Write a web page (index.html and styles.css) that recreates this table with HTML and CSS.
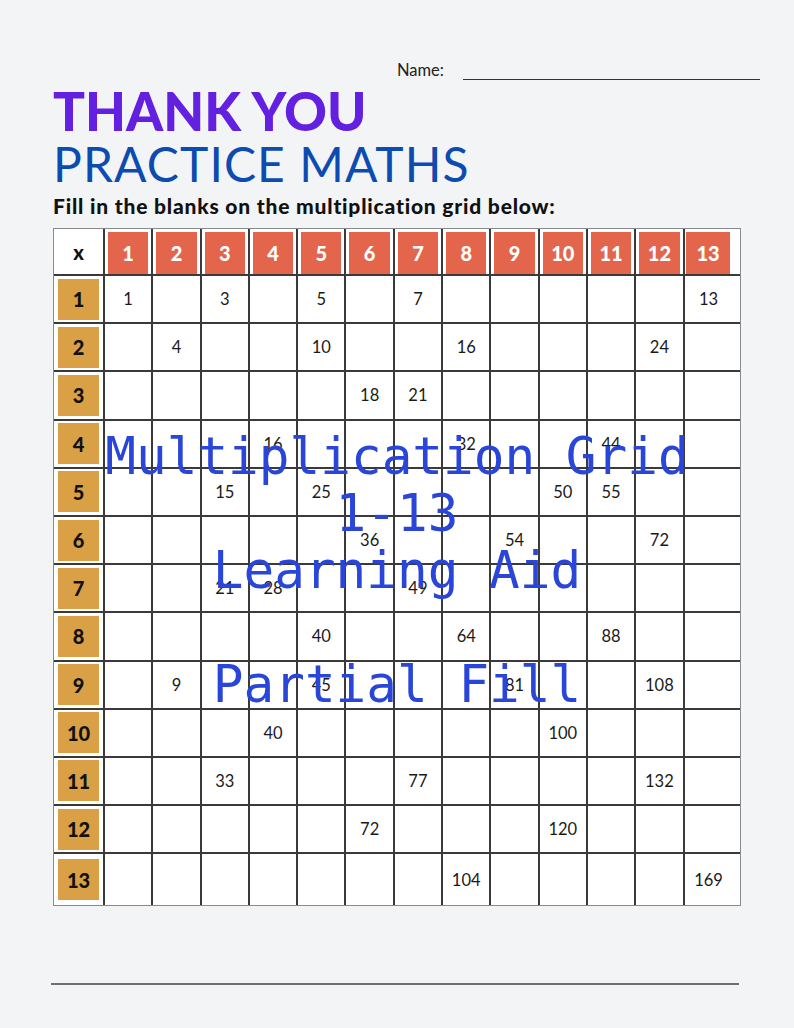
FILE: index.html
```html
<!DOCTYPE html>
<html lang="en">
<head>
<meta charset="utf-8">
<title>Multiplication Grid</title>
<link rel="stylesheet" href="styles.css">
</head>
<body>
<div class="page">
  <div class="name-row">
    <span class="name-label">Name:</span>
    <span class="name-line"></span>
  </div>
  <h1 class="title-main">THANK YOU</h1>
  <h2 class="title-sub">PRACTICE MATHS</h2>
  <p class="instructions">Fill in the blanks on the multiplication grid below:</p>

  <div class="grid-wrap">
    <div class="grid">
      <div class="cell corner">x</div>
      <div class="cell"><span class="col-head">1</span></div>
      <div class="cell"><span class="col-head">2</span></div>
      <div class="cell"><span class="col-head">3</span></div>
      <div class="cell"><span class="col-head">4</span></div>
      <div class="cell"><span class="col-head">5</span></div>
      <div class="cell"><span class="col-head">6</span></div>
      <div class="cell"><span class="col-head">7</span></div>
      <div class="cell"><span class="col-head">8</span></div>
      <div class="cell"><span class="col-head">9</span></div>
      <div class="cell"><span class="col-head">10</span></div>
      <div class="cell"><span class="col-head">11</span></div>
      <div class="cell"><span class="col-head">12</span></div>
      <div class="cell last-col"><span class="col-head">13</span></div>

      <div class="cell row-cell"><span class="row-head">1</span></div>
      <div class="cell">1</div><div class="cell"></div><div class="cell">3</div><div class="cell"></div><div class="cell">5</div><div class="cell"></div><div class="cell">7</div><div class="cell"></div><div class="cell"></div><div class="cell"></div><div class="cell"></div><div class="cell"></div><div class="cell last-col">13</div>

      <div class="cell row-cell"><span class="row-head">2</span></div>
      <div class="cell"></div><div class="cell">4</div><div class="cell"></div><div class="cell"></div><div class="cell">10</div><div class="cell"></div><div class="cell"></div><div class="cell">16</div><div class="cell"></div><div class="cell"></div><div class="cell"></div><div class="cell">24</div><div class="cell"></div>

      <div class="cell row-cell"><span class="row-head">3</span></div>
      <div class="cell"></div><div class="cell"></div><div class="cell"></div><div class="cell"></div><div class="cell"></div><div class="cell">18</div><div class="cell">21</div><div class="cell"></div><div class="cell"></div><div class="cell"></div><div class="cell"></div><div class="cell"></div><div class="cell"></div>

      <div class="cell row-cell"><span class="row-head">4</span></div>
      <div class="cell"></div><div class="cell"></div><div class="cell"></div><div class="cell">16</div><div class="cell"></div><div class="cell"></div><div class="cell"></div><div class="cell">32</div><div class="cell"></div><div class="cell"></div><div class="cell">44</div><div class="cell"></div><div class="cell"></div>

      <div class="cell row-cell"><span class="row-head">5</span></div>
      <div class="cell"></div><div class="cell"></div><div class="cell">15</div><div class="cell"></div><div class="cell">25</div><div class="cell"></div><div class="cell"></div><div class="cell"></div><div class="cell"></div><div class="cell">50</div><div class="cell">55</div><div class="cell"></div><div class="cell"></div>

      <div class="cell row-cell"><span class="row-head">6</span></div>
      <div class="cell"></div><div class="cell"></div><div class="cell"></div><div class="cell"></div><div class="cell"></div><div class="cell">36</div><div class="cell"></div><div class="cell"></div><div class="cell">54</div><div class="cell"></div><div class="cell"></div><div class="cell">72</div><div class="cell"></div>

      <div class="cell row-cell"><span class="row-head">7</span></div>
      <div class="cell"></div><div class="cell"></div><div class="cell">21</div><div class="cell">28</div><div class="cell"></div><div class="cell"></div><div class="cell">49</div><div class="cell"></div><div class="cell"></div><div class="cell"></div><div class="cell"></div><div class="cell"></div><div class="cell"></div>

      <div class="cell row-cell"><span class="row-head">8</span></div>
      <div class="cell"></div><div class="cell"></div><div class="cell"></div><div class="cell"></div><div class="cell">40</div><div class="cell"></div><div class="cell"></div><div class="cell">64</div><div class="cell"></div><div class="cell"></div><div class="cell">88</div><div class="cell"></div><div class="cell"></div>

      <div class="cell row-cell"><span class="row-head">9</span></div>
      <div class="cell"></div><div class="cell">9</div><div class="cell"></div><div class="cell"></div><div class="cell">45</div><div class="cell"></div><div class="cell"></div><div class="cell"></div><div class="cell">81</div><div class="cell"></div><div class="cell"></div><div class="cell">108</div><div class="cell"></div>

      <div class="cell row-cell"><span class="row-head">10</span></div>
      <div class="cell"></div><div class="cell"></div><div class="cell"></div><div class="cell">40</div><div class="cell"></div><div class="cell"></div><div class="cell"></div><div class="cell"></div><div class="cell"></div><div class="cell">100</div><div class="cell"></div><div class="cell"></div><div class="cell"></div>

      <div class="cell row-cell"><span class="row-head">11</span></div>
      <div class="cell"></div><div class="cell"></div><div class="cell">33</div><div class="cell"></div><div class="cell"></div><div class="cell"></div><div class="cell">77</div><div class="cell"></div><div class="cell"></div><div class="cell"></div><div class="cell"></div><div class="cell">132</div><div class="cell"></div>

      <div class="cell row-cell"><span class="row-head">12</span></div>
      <div class="cell"></div><div class="cell"></div><div class="cell"></div><div class="cell"></div><div class="cell"></div><div class="cell">72</div><div class="cell"></div><div class="cell"></div><div class="cell"></div><div class="cell">120</div><div class="cell"></div><div class="cell"></div><div class="cell"></div>

      <div class="cell row-cell"><span class="row-head">13</span></div>
      <div class="cell"></div><div class="cell"></div><div class="cell"></div><div class="cell"></div><div class="cell"></div><div class="cell"></div><div class="cell"></div><div class="cell">104</div><div class="cell"></div><div class="cell"></div><div class="cell"></div><div class="cell"></div><div class="cell last-col">169</div>
    </div>
    <div class="watermark">Multiplication Grid
1-13
Learning Aid

Partial Fill</div>
  </div>

  <div class="footer-line"></div>
</div>
</body>
</html>
```

FILE: styles.css
```css
* { box-sizing: border-box; }

html, body {
  margin: 0;
  padding: 0;
  background: #f3f4f6;
}

body {
  font-family: "Lato", "Liberation Sans", sans-serif;
  color: #111;
}

.page {
  width: 794px;
  height: 1028px;
  padding: 57px 0 0 53px;
  position: relative;
}

.name-row {
  display: flex;
  align-items: flex-end;
  margin-left: 344px;
  height: 22px;
}

.name-label {
  font-size: 16.5px;
  color: #222;
  line-height: 18px;
}

.name-line {
  display: block;
  width: 297px;
  margin-left: 19px;
  border-bottom: 1.4px solid #333;
  margin-bottom: -1px;
}

.title-main {
  margin: 5px 0 0 0;
  font-size: 53px;
  line-height: 54px;
  font-weight: 900;
  color: #6320e0;
  letter-spacing: 0;
}

.title-sub {
  margin: 0;
  font-size: 48px;
  line-height: 52px;
  font-weight: 400;
  color: #0c4bb0;
  letter-spacing: 1.1px;
}

.instructions {
  margin: 4px 0 0 0;
  font-size: 21px;
  line-height: 24px;
  font-weight: 900;
  color: #111;
  letter-spacing: 0.8px;
}

.grid-wrap {
  position: relative;
  margin-top: 10px;
  width: 688px;
}

.grid {
  display: grid;
  grid-template-columns: 49px repeat(12, 46.3px) 55px;
  grid-template-rows: 45px repeat(12, 46.2px) 51px;
  gap: 2px;
  background: #3a3a3a;
  border: 1.5px solid #8a8a8a;
}

.cell {
  background: #fff;
  display: flex;
  align-items: center;
  justify-content: center;
  font-size: 16.5px;
  color: #1a1a1a;
}

.cell.last-col {
  padding-right: 7px;
}

.corner {
  font-size: 20px;
  font-weight: 900;
  color: #111;
}

.col-head {
  display: flex;
  align-items: center;
  justify-content: center;
  width: calc(100% - 6px);
  height: calc(100% - 3px);
  margin-top: 2px;
  background: #e3654b;
  color: #fff;
  font-size: 20px;
  font-weight: 900;
}

.last-col .col-head {
  width: 44px;
  margin-right: 1px;
}

.row-head {
  display: flex;
  align-items: center;
  justify-content: center;
  width: 41px;
  height: 41px;
  background: #d9a046;
  color: #111;
  font-size: 20px;
  font-weight: 900;
}

.watermark {
  position: absolute;
  left: -53px;
  width: 794px;
  top: 200px;
  text-align: center;
  white-space: pre;
  font-family: "DejaVu Sans Mono", "Liberation Mono", monospace;
  font-size: 51px;
  line-height: 57px;
  color: #2a46d8;
  pointer-events: none;
}

.footer-line {
  width: 688px;
  height: 2px;
  margin-top: 77px;
  margin-left: -2px;
  background: #6b6e72;
}
```
